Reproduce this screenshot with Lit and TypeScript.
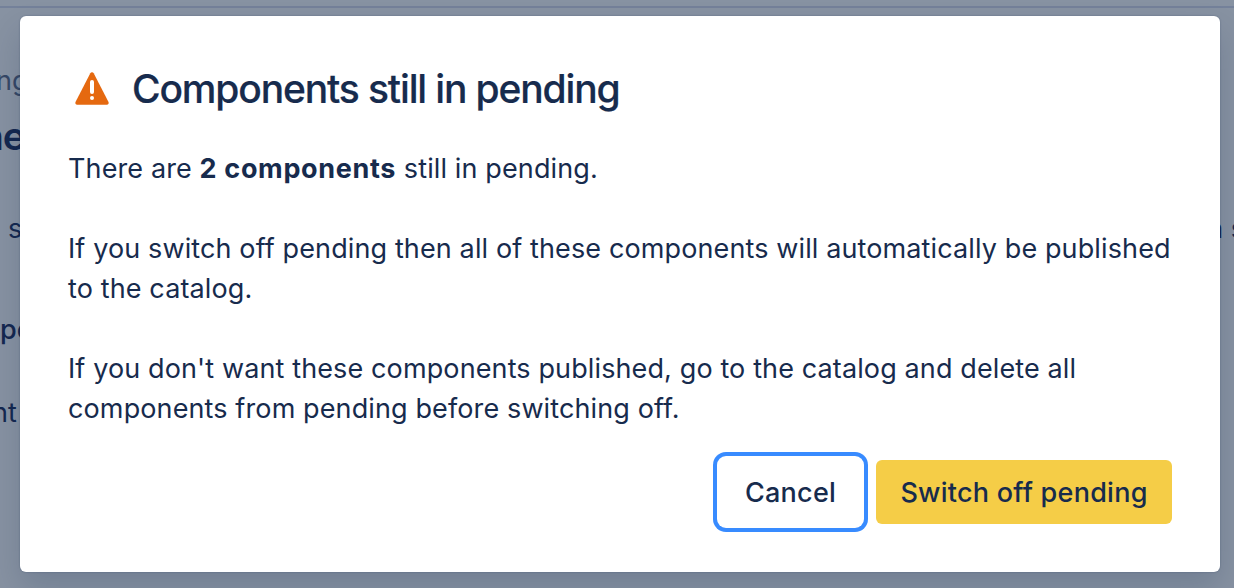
import { LitElement, html, css } from 'lit';
import { customElement, property } from 'lit/decorators.js';

@customElement('warning-icon')
export class WarningIcon extends LitElement {
  static override styles = css`
    :host {
      display: block;
      width: 48px;
      height: 48px;
    }

    svg {
      display: block;
      fill: #e56910;
    }

    .mark {
      fill: white;
    }
  `;

  override render() {
    return html`
      <svg width="48" height="48" viewBox="0 0 48 48">
        <path
          d="M22.3 9.2 7.5 38C6.9 39.3 7.8 40.8 9.2 40.8H38.8C40.2 40.8 41.1 39.3 40.5 38L25.7 9.2C25 8 23 8 22.3 9.2Z"
        />
        <rect class="mark" x="22" y="16" width="4" height="14" rx="2" />
        <circle class="mark" cx="24" cy="34" r="2" />
      </svg>
    `;
  }
}

@customElement('confirm-dialog')
export class ConfirmDialog extends LitElement {
  static override styles = css`
    :host {
      display: block;
      box-sizing: border-box;
      padding: 48px;
      border-radius: 6px;
      background: white;
      color: #172b4d;
      box-shadow: 0 0 2px rgba(9, 30, 66, 0.31),
        0 16px 32px rgba(9, 30, 66, 0.16);
    }

    header {
      display: flex;
      align-items: center;
      gap: 16px;
      height: 48px;
    }

    h1 {
      margin: 0;
      padding-top: 2px;
      font-size: 39px;
      font-weight: 500;
      line-height: 48px;
      letter-spacing: -1.15px;
      white-space: nowrap;
      -webkit-text-stroke: 0.2px currentColor;
    }

    .body {
      margin-top: 37px;
      font-size: 27px;
      line-height: 40px;
      letter-spacing: 0.12px;
      white-space: nowrap;
    }

    p {
      margin: 0 0 40px;
    }

    strong {
      font-weight: 700;
      letter-spacing: 0.66px;
    }

    footer {
      display: flex;
      justify-content: flex-end;
      align-items: center;
      gap: 12px;
      height: 64px;
      margin-top: -9px;
    }

    button {
      height: 64px;
      padding: 1px 0 0;
      border: none;
      border-radius: 6px;
      background: white;
      color: inherit;
      font: 500 27px / 63px Inter, sans-serif;
      letter-spacing: 0.25px;
      white-space: nowrap;
    }

    .cancel {
      flex: none;
      width: 147px;
      height: 72px;
      border-radius: 9px;
      box-shadow: 0 0 0 4px #388bff;
    }

    .confirm {
      flex: none;
      width: 296px;
      background: #f5cd47;
    }
  `;

  @property({ type: Number }) count = 0;

  override render() {
    return html`
      <header>
        <warning-icon></warning-icon>
        <h1>Components still in pending</h1>
      </header>
      <div class="body">
        <p>There are <strong>${this.count} components</strong> still in pending.</p>
        <p>
          If you switch off pending then all of these components will automatically be published<br />
          to the catalog.
        </p>
        <p>
          If you don't want these components published, go to the catalog and delete all<br />
          components from pending before switching off.
        </p>
      </div>
      <footer>
        <button class="cancel">Cancel</button>
        <button class="confirm">Switch off pending</button>
      </footer>
    `;
  }
}

@customElement('app-root')
export class AppRoot extends LitElement {
  static override styles = css`
    :host {
      display: block;
      position: relative;
      width: 1234px;
      height: 588px;
      overflow: hidden;
      background: #8792a2;
      color: #142850;
      font-family: Inter, sans-serif;
    }

    .page {
      display: flex;
      flex-direction: column;
      border-top: 2px solid #74819a;
      margin-top: 6px;
      font-size: 27px;
      line-height: 40px;
      white-space: nowrap;
    }

    .page div {
      display: flex;
      justify-content: space-between;
      height: 40px;
    }

    .page .crumb {
      margin: 53px 0 0 -4px;
      color: #364866;
    }

    .page .heading {
      margin: 15px 0 0 -20px;
      font-size: 39px;
      font-weight: 600;
      letter-spacing: -1.2px;
    }

    .page .intro {
      margin: 53px -11px 0 8px;
    }

    .page .label {
      margin-top: 61px;
      font-weight: 500;
    }

    .page .hint {
      margin: 43px 0 0 -8px;
    }

    confirm-dialog {
      position: absolute;
      top: 16px;
      left: 20px;
      width: 1200px;
      height: 556px;
    }
  `;

  override render() {
    return html`
      <div class="page">
        <div class="crumb">ng</div>
        <div class="heading">ne</div>
        <div class="intro"><span>s</span><span>n s</span></div>
        <div class="label">pe</div>
        <div class="hint">nt</div>
      </div>
      <confirm-dialog .count=${2}></confirm-dialog>
    `;
  }
}

declare global {
  interface HTMLElementTagNameMap {
    'app-root': AppRoot;
    'confirm-dialog': ConfirmDialog;
    'warning-icon': WarningIcon;
  }
}
